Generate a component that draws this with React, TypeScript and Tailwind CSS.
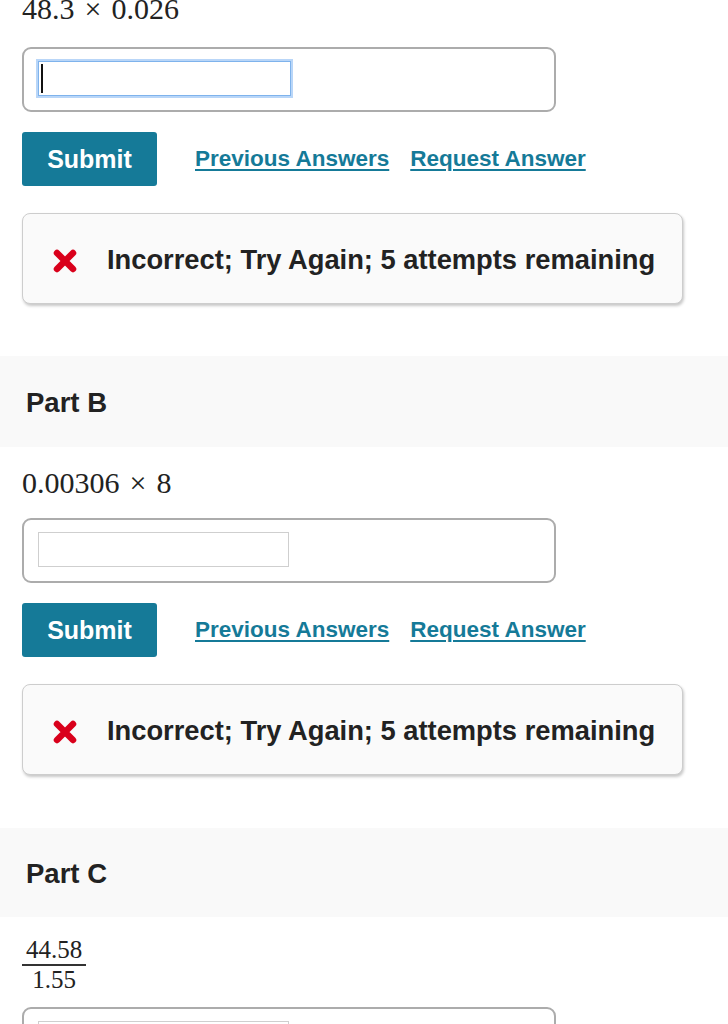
import React from 'react'

const sans = { fontFamily: '"Liberation Sans", Arial, Helvetica, sans-serif' }
const serif = { fontFamily: '"Liberation Serif", "Times New Roman", serif' }

function Times() {
  return <span className="mx-[10px]">×</span>
}

function AnswerBox({ focused }: { focused?: boolean }) {
  return (
    <div className="w-[534px] h-[65px] border-2 border-[#acacac] rounded-[9px] bg-white px-[14px] pt-[12px]">
      {focused ? (
        <div className="w-[253px] h-[35px] border border-[#7fb3ec] shadow-[0_0_0_2px_#b9d6f8] bg-white flex items-center pl-[2px]">
          <div className="w-[2px] h-[29px] bg-[#111]" />
        </div>
      ) : (
        <div className="w-[251px] h-[35px] border border-[#cfcfcf] bg-white" />
      )}
    </div>
  )
}

function Actions() {
  return (
    <div className="flex items-center mt-[20px]" style={sans}>
      <button className="w-[135px] h-[54px] bg-[#157a98] rounded-[3px] text-white text-[25px] font-bold pt-[1px]">
        Submit
      </button>
      <a className="ml-[38px] text-[22.5px] font-bold text-[#157a98] underline underline-offset-[3px] decoration-[2px]">
        Previous Answers
      </a>
      <a className="ml-[21px] text-[22.5px] font-bold text-[#157a98] underline underline-offset-[3px] decoration-[2px]">
        Request Answer
      </a>
    </div>
  )
}

function Feedback() {
  return (
    <div
      className="mt-[27px] w-[661px] h-[91px] border border-[#cdcdcd] rounded-[8px] bg-[#fafafa] shadow-[1px_2px_3px_rgba(0,0,0,0.22)] flex items-center pl-[29px] pt-[4px]"
      style={sans}
    >
      <svg width="26" height="26" viewBox="0 0 26 26">
        <path d="M5 5 L21 21 M21 5 L5 21" stroke="#d9001b" strokeWidth="6.5" strokeLinecap="round" fill="none" />
      </svg>
      <span className="ml-[29px] text-[27.3px] font-bold text-[#222]">
        Incorrect; Try Again; 5 attempts remaining
      </span>
    </div>
  )
}

function PartHeader({ label, mt, h }: { label: string; mt: string; h: string }) {
  return (
    <div className={`${mt} ${h} bg-[#f9f9f9] flex items-center pl-[26px] pt-[2px]`} style={sans}>
      <span className="text-[27.5px] font-bold text-[#222]">{label}</span>
    </div>
  )
}

export default function App() {
  return (
    <div className="w-[728px] h-[1024px] overflow-hidden bg-white text-[#222]">
      <div className="px-[22px]">
        <div className="mt-[-9px] h-[36px] leading-[36px] text-[30px]" style={serif}>
          48.3<Times />0.026
        </div>
        <div className="mt-[20px]">
          <AnswerBox focused />
        </div>
        <Actions />
        <Feedback />
      </div>

      <PartHeader label="Part B" mt="mt-[52px]" h="h-[91px]" />

      <div className="px-[22px]">
        <div className="mt-[18px] h-[36px] leading-[36px] text-[30px]" style={serif}>
          0.00306<Times />8
        </div>
        <div className="mt-[17px]">
          <AnswerBox />
        </div>
        <Actions />
        <Feedback />
      </div>

      <PartHeader label="Part C" mt="mt-[53px]" h="h-[89px]" />

      <div className="px-[22px]">
        <div className="mt-[21px] inline-flex flex-col items-center text-[25px]" style={serif}>
          <span className="leading-[24px] pb-[2px] px-[4px] border-b-[2px] border-[#333]">44.58</span>
          <span className="leading-[24px] pt-[2px]">1.55</span>
        </div>
        <div className="mt-[15px]">
          <AnswerBox />
        </div>
      </div>
    </div>
  )
}
